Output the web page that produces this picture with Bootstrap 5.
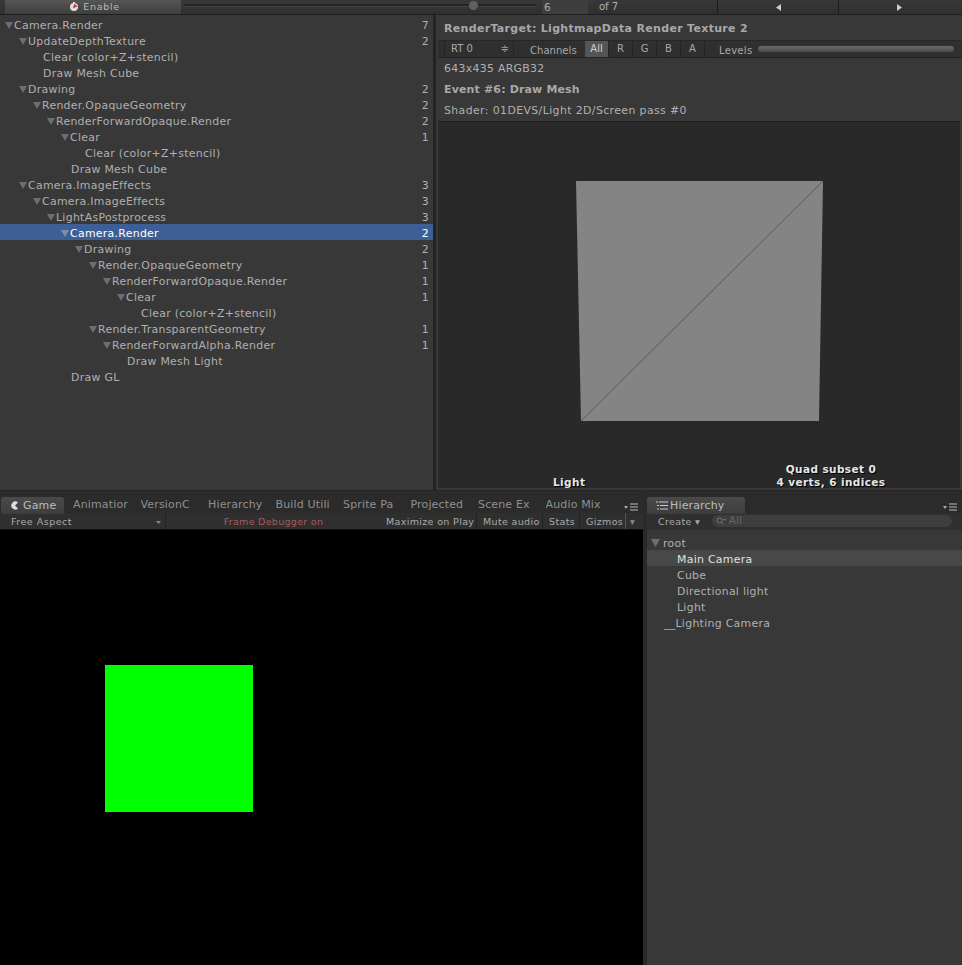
<!DOCTYPE html>
<html lang="en"><head><meta charset="utf-8"><title>Frame Debugger</title>
<link href="https://cdn.jsdelivr.net/npm/bootstrap@5.3.0/dist/css/bootstrap.min.css" rel="stylesheet">
<style>
html,body{height:965px;overflow:hidden}
body{background:#2a2a2a;font-family:"DejaVu Sans",sans-serif;font-size:11px;line-height:16px;color:#b0b0b0;width:962px}
.topbar{height:15px;background:linear-gradient(#383838,#2f2f2f);border-bottom:1px solid #1f1f1f}
.enable-btn{margin-left:5px;width:176px;height:14px;padding:0 0 1px 4px;background:linear-gradient(#555,#3f3f3f);font-size:9.5px;line-height:12px;color:#b8b8b8;letter-spacing:.7px;gap:5px}
.rec{width:8px;height:9px}
.slide-track{margin-left:3px;width:352px;height:3px;border-radius:2px;background:#232323;border-bottom:1px solid #444}
.slide-thumb{left:285px;top:-3px;width:9px;height:9px;border-radius:50%;background:#5f5f5f}
.frame-field{margin-left:6px;width:46px;height:14px;background:#3e3e3e;line-height:14px;padding-left:2px;font-size:10.5px;color:#aaa}
.of-seven{margin-left:11px;width:118px;font-size:10px;line-height:14px}
.step-btn{width:121px;height:14px;border-left:1px solid #1e1e1e}
.main-pane{height:475px}
.tree-pane{width:433px;background:#383838;padding-top:1px}
.pane-rule{width:3px;background:#232323}
.tree-row{height:16px;padding:2px 4px 0 0;white-space:nowrap;font-size:10.9px;letter-spacing:.3px}
.tree-row.sel{background:#3e5f96;color:#fff}
.tri{width:8px;height:7px;margin:4px 1px 0 -10px;flex:none}
.lv0{padding-left:15px}.lv1{padding-left:29px}.lv2{padding-left:43px}.lv3{padding-left:57px}.lv4{padding-left:71px}.lv5{padding-left:85px}.lv6{padding-left:99px}.lv7{padding-left:113px}.lv8{padding-left:127px}.lv9{padding-left:141px}
.info-pane{flex:1;background:#383838;padding-left:2px;min-width:0}
.rt-title{height:25px;padding:6px 0 0 6px;font-weight:700;color:#a8a8a8;font-size:11px;letter-spacing:.32px}
.rt-tools{height:18px;background:#2f2f2f;border-top:1px solid #272727;border-bottom:1px solid #232323;font-size:10px;color:#a8a8a8}
.rt-select{width:70px;padding-left:6px;height:16px;line-height:16px;border-right:1px solid #242424;border-left:1px solid #242424;margin-left:6px;padding-right:4px}
.ch-lbl{width:71px;padding-left:16px;line-height:20px;letter-spacing:.05px}
.ch-btn{width:24px;height:16px;text-align:center;line-height:15px;border-right:1px solid #242424}
.ch-btn.on{background:#555;color:#d0d0d0}
.lvl-lbl{margin-left:14px;line-height:20px;letter-spacing:.3px}
.lvl-track{margin-left:5px;width:198px;height:8px;border-radius:4px;background:linear-gradient(#6a6a6a,#4a4a4a);border:1px solid #333}
.rt-meta{padding-left:6px;font-size:10.9px;letter-spacing:.3px;height:22px;line-height:22px}
.rt-event{padding-left:6px;font-weight:700;height:20px;line-height:20px;font-size:11px;letter-spacing:.15px;color:#a8a8a8}
.rt-shader{padding-left:6px;font-size:10.9px;letter-spacing:.4px;height:21px;line-height:22px}
.preview{margin:0 2px 0 0;height:367px;background:#292929;border-top:1px solid #1f1f1f;overflow:hidden}
.mesh{left:0;top:0;width:522px;height:368px}
.lbl{color:#e6e6e6;font-weight:700;font-size:10.5px;line-height:13px;letter-spacing:.4px;text-shadow:1px 1px 0 #000;text-align:center}
.lbl-light{left:115px;top:354px}
.lbl-quad{left:328px;top:341px;width:130px}
.lower{height:475px;background:#2a2a2a}
.game-pane{width:643px}
.tabbar{height:23px;background:#2b2b2b;border-top:1px solid #232323;padding-top:6px;position:relative}
.etab{height:17px;line-height:16px;color:#8f8f8f;flex:none;width:67.5px;padding-left:9px;font-size:11px;letter-spacing:.15px}
.etab-lbl{display:block;width:55px;overflow:hidden;white-space:nowrap}
.etab.on{background:linear-gradient(#4a4a4a,#3d3d3d);color:#bcbcbc;border-radius:3px 3px 0 0;width:63px;margin-left:1px;gap:4px}
.hier-tabs .etab.on{width:98px;margin-left:0;gap:2px}
.menu-ico{right:5px;top:12px;width:14px;height:10px}
.g-tools{height:17px;background:#2f2f2f;font-size:9.5px;line-height:17px;color:#aaa;letter-spacing:.35px;border-bottom:1px solid #111}
.aspect{width:166px;padding-left:11px;border-right:1px solid #222;position:relative;letter-spacing:.5px}
.dbg-on{width:214px;text-align:center;color:#a65a5a;padding-left:1px;letter-spacing:.3px}
.g-b{padding-left:6px;border-right:1px solid #222;white-space:nowrap}
.gb1{width:97px}.gb2{width:66px}.gb3{width:37px}.gb4{width:60px;border-right:0}
.caret-sep{margin-left:2px;padding-left:4px;border-left:1px solid #555;color:#888}
.view{height:435px;background:#000}
.cube{left:105px;top:135px;width:148px;height:147px;background:#0f0}
.gutter{width:4px;background:#2a2a2a}
.hier-pane{flex:1;background:#383838;min-width:0}
.hier-tabs{background:#2b2b2b}
.h-tools{height:17px;background:#2f2f2f;font-size:9.5px;line-height:17px;letter-spacing:.35px;color:#a8a8a8}
.create{width:65px;padding-left:11px}
.search{width:240px;height:12px;margin-top:2px;border-radius:6px;background:#3e3e3e;color:#666;line-height:12px;padding-left:4px;font-size:10px;gap:3px}
.h-list{padding-top:4px}
.h-row{height:16px;padding:2px 0 0 30px;font-size:10.9px;letter-spacing:.3px;white-space:nowrap}
.h-row.root{padding-left:16px}
.h-row.under{padding-left:17px}
.h-row.cur{background:#484848;color:#e0e0e0}
.h-row .tri{width:9px;height:8px;margin:3px 3px 0 -12px}
</style></head><body>
<div class="topbar d-flex align-items-start">
  <div class="enable-btn d-flex justify-content-center align-items-center"><svg class="rec" viewBox="0 0 8 9"><rect x="3" width="2" height="1.500" fill="#ddd"/><circle cx="4" cy="5" r="4" fill="#ddd"/><path d="M4 5V2.200A2.800 2.800 0 0 1 6.800 5Z" fill="#c33"/><circle cx="4" cy="5" r="1" fill="#c33"/></svg><span>Enable</span></div>
  <div class="slide-track position-relative mt-1"><div class="slide-thumb position-absolute"></div></div>
  <div class="frame-field">6</div>
  <div class="of-seven">of 7</div>
  <div class="step-btn d-flex justify-content-center align-items-center"><svg width="5" height="7" viewBox="0 0 5 7"><path d="M5 0V7L0 3.500Z" fill="#ccc"/></svg></div>
  <div class="step-btn d-flex justify-content-center align-items-center"><svg width="5" height="7" viewBox="0 0 5 7"><path d="M0 0V7L5 3.500Z" fill="#ccc"/></svg></div>
</div>
<div class="main-pane d-flex">
  <div class="tree-pane">
    <div class="tree-row lv0 d-flex align-items-start"><svg class="tri" viewBox="0 0 8 7"><path d="M0 0H8L4 7Z" fill="#6e6e6e"/></svg><span class="flex-grow-1">Camera.Render</span><span>7</span></div>
    <div class="tree-row lv1 d-flex align-items-start"><svg class="tri" viewBox="0 0 8 7"><path d="M0 0H8L4 7Z" fill="#6e6e6e"/></svg><span class="flex-grow-1">UpdateDepthTexture</span><span>2</span></div>
    <div class="tree-row lv2">Clear (color+Z+stencil)</div>
    <div class="tree-row lv2">Draw Mesh Cube</div>
    <div class="tree-row lv1 d-flex align-items-start"><svg class="tri" viewBox="0 0 8 7"><path d="M0 0H8L4 7Z" fill="#6e6e6e"/></svg><span class="flex-grow-1">Drawing</span><span>2</span></div>
    <div class="tree-row lv2 d-flex align-items-start"><svg class="tri" viewBox="0 0 8 7"><path d="M0 0H8L4 7Z" fill="#6e6e6e"/></svg><span class="flex-grow-1">Render.OpaqueGeometry</span><span>2</span></div>
    <div class="tree-row lv3 d-flex align-items-start"><svg class="tri" viewBox="0 0 8 7"><path d="M0 0H8L4 7Z" fill="#6e6e6e"/></svg><span class="flex-grow-1">RenderForwardOpaque.Render</span><span>2</span></div>
    <div class="tree-row lv4 d-flex align-items-start"><svg class="tri" viewBox="0 0 8 7"><path d="M0 0H8L4 7Z" fill="#6e6e6e"/></svg><span class="flex-grow-1">Clear</span><span>1</span></div>
    <div class="tree-row lv5">Clear (color+Z+stencil)</div>
    <div class="tree-row lv4">Draw Mesh Cube</div>
    <div class="tree-row lv1 d-flex align-items-start"><svg class="tri" viewBox="0 0 8 7"><path d="M0 0H8L4 7Z" fill="#6e6e6e"/></svg><span class="flex-grow-1">Camera.ImageEffects</span><span>3</span></div>
    <div class="tree-row lv2 d-flex align-items-start"><svg class="tri" viewBox="0 0 8 7"><path d="M0 0H8L4 7Z" fill="#6e6e6e"/></svg><span class="flex-grow-1">Camera.ImageEffects</span><span>3</span></div>
    <div class="tree-row lv3 d-flex align-items-start"><svg class="tri" viewBox="0 0 8 7"><path d="M0 0H8L4 7Z" fill="#6e6e6e"/></svg><span class="flex-grow-1">LightAsPostprocess</span><span>3</span></div>
    <div class="tree-row lv4 sel d-flex align-items-start"><svg class="tri" viewBox="0 0 8 7"><path d="M0 0H8L4 7Z" fill="#7f8ea8"/></svg><span class="flex-grow-1">Camera.Render</span><span>2</span></div>
    <div class="tree-row lv5 d-flex align-items-start"><svg class="tri" viewBox="0 0 8 7"><path d="M0 0H8L4 7Z" fill="#6e6e6e"/></svg><span class="flex-grow-1">Drawing</span><span>2</span></div>
    <div class="tree-row lv6 d-flex align-items-start"><svg class="tri" viewBox="0 0 8 7"><path d="M0 0H8L4 7Z" fill="#6e6e6e"/></svg><span class="flex-grow-1">Render.OpaqueGeometry</span><span>1</span></div>
    <div class="tree-row lv7 d-flex align-items-start"><svg class="tri" viewBox="0 0 8 7"><path d="M0 0H8L4 7Z" fill="#6e6e6e"/></svg><span class="flex-grow-1">RenderForwardOpaque.Render</span><span>1</span></div>
    <div class="tree-row lv8 d-flex align-items-start"><svg class="tri" viewBox="0 0 8 7"><path d="M0 0H8L4 7Z" fill="#6e6e6e"/></svg><span class="flex-grow-1">Clear</span><span>1</span></div>
    <div class="tree-row lv9">Clear (color+Z+stencil)</div>
    <div class="tree-row lv6 d-flex align-items-start"><svg class="tri" viewBox="0 0 8 7"><path d="M0 0H8L4 7Z" fill="#6e6e6e"/></svg><span class="flex-grow-1">Render.TransparentGeometry</span><span>1</span></div>
    <div class="tree-row lv7 d-flex align-items-start"><svg class="tri" viewBox="0 0 8 7"><path d="M0 0H8L4 7Z" fill="#6e6e6e"/></svg><span class="flex-grow-1">RenderForwardAlpha.Render</span><span>1</span></div>
    <div class="tree-row lv8">Draw Mesh Light</div>
    <div class="tree-row lv4">Draw GL</div>
  </div>
  <div class="pane-rule"></div>
  <div class="info-pane">
    <div class="rt-title">RenderTarget: LightmapData Render Texture 2</div>
    <div class="rt-tools d-flex">
      <div class="rt-select d-flex justify-content-between"><span>RT 0</span><span>≑</span></div>
      <div class="ch-lbl">Channels</div>
      <div class="ch-btn on">All</div><div class="ch-btn">R</div><div class="ch-btn">G</div><div class="ch-btn">B</div><div class="ch-btn">A</div>
      <div class="lvl-lbl">Levels</div>
      <div class="lvl-track mt-1"></div>
    </div>
    <div class="rt-meta">643x435 ARGB32</div>
    <div class="rt-event">Event #6: Draw Mesh</div>
    <div class="rt-shader">Shader: 01DEVS/Light 2D/Screen pass #0</div>
    <div class="preview position-relative">
      <svg class="mesh position-absolute" viewBox="0 0 522 368"><polygon points="138,59 385,59 381,299 143,299" fill="#848484"/><line x1="143" y1="299" x2="385" y2="59" stroke="#5c5c5c"/></svg>
      <div class="lbl lbl-light position-absolute">Light</div>
      <div class="lbl lbl-quad position-absolute">Quad subset 0<br>4 verts, 6 indices</div>
    </div>
  </div>
</div>
<div class="lower d-flex">
  <div class="game-pane">
    <div class="tabbar d-flex">
      <div class="etab on d-flex align-items-center"><svg width="9" height="9" viewBox="0 0 9 9"><path d="M8 1.500A4 4 0 1 0 8 7.500L5 4.500Z" fill="#ddd"/></svg><span>Game</span></div>
      <div class="etab"><span class="etab-lbl">Animatior</span></div><div class="etab"><span class="etab-lbl">VersionC</span></div><div class="etab"><span class="etab-lbl">Hierarchy</span></div><div class="etab"><span class="etab-lbl">Build Utili</span></div><div class="etab"><span class="etab-lbl">Sprite Pa</span></div><div class="etab"><span class="etab-lbl">Projected</span></div><div class="etab"><span class="etab-lbl">Scene Ex</span></div><div class="etab"><span class="etab-lbl">Audio Mix</span></div>
      <svg class="menu-ico position-absolute" viewBox="0 0 14 10"><path d="M0 3H4L2 6Z" fill="#aaa"/><path d="M6 1H14M6 4H14M6 7H14" stroke="#bbb"/></svg>
    </div>
    <div class="g-tools d-flex">
      <div class="aspect">Free Aspect<svg class="position-absolute top-50 end-0 me-1" width="5" height="3" viewBox="0 0 5 3"><path d="M0 0H5L2.500 3Z" fill="#888"/></svg></div>
      <div class="dbg-on">Frame Debugger on</div>
      <div class="g-b gb1">Maximize on Play</div><div class="g-b gb2">Mute audio</div><div class="g-b gb3">Stats</div><div class="g-b gb4 d-flex">Gizmos<span class="caret-sep">▾</span></div>
    </div>
    <div class="view position-relative"><div class="cube position-absolute"></div></div>
  </div>
  <div class="gutter"></div>
  <div class="hier-pane">
    <div class="tabbar hier-tabs d-flex">
      <div class="etab on d-flex align-items-center"><svg width="12" height="9" viewBox="0 0 12 9"><path d="M3 1H12M4 4.500H12M4 8H12M0 1H2M1 4.500H3M1 8H3" stroke="#ccc"/></svg><span>Hierarchy</span></div>
      <svg class="menu-ico position-absolute" viewBox="0 0 14 10"><path d="M0 3H4L2 6Z" fill="#aaa"/><path d="M6 1H14M6 4H14M6 7H14" stroke="#bbb"/></svg>
    </div>
    <div class="h-tools d-flex"><div class="create">Create ▾</div><div class="search d-flex align-items-center"><svg width="10" height="8" viewBox="0 0 10 8"><circle cx="3.500" cy="3.500" r="2.500" fill="none" stroke="#777"/><path d="M5.500 5.500L7.500 7.500" stroke="#777"/><path d="M7 2H10L8.500 4Z" fill="#777"/></svg><span>All</span></div></div>
    <div class="h-list">
      <div class="h-row root d-flex align-items-start"><svg class="tri" viewBox="0 0 8 7"><path d="M0 0H8L4 7Z" fill="#6e6e6e"/></svg><span>root</span></div>
      <div class="h-row cur">Main Camera</div>
      <div class="h-row">Cube</div>
      <div class="h-row">Directional light</div>
      <div class="h-row">Light</div>
      <div class="h-row under">__Lighting Camera</div>
    </div>
  </div>
</div>
<script src="https://cdn.jsdelivr.net/npm/bootstrap@5.3.0/dist/js/bootstrap.bundle.min.js"></script>
</body></html>
